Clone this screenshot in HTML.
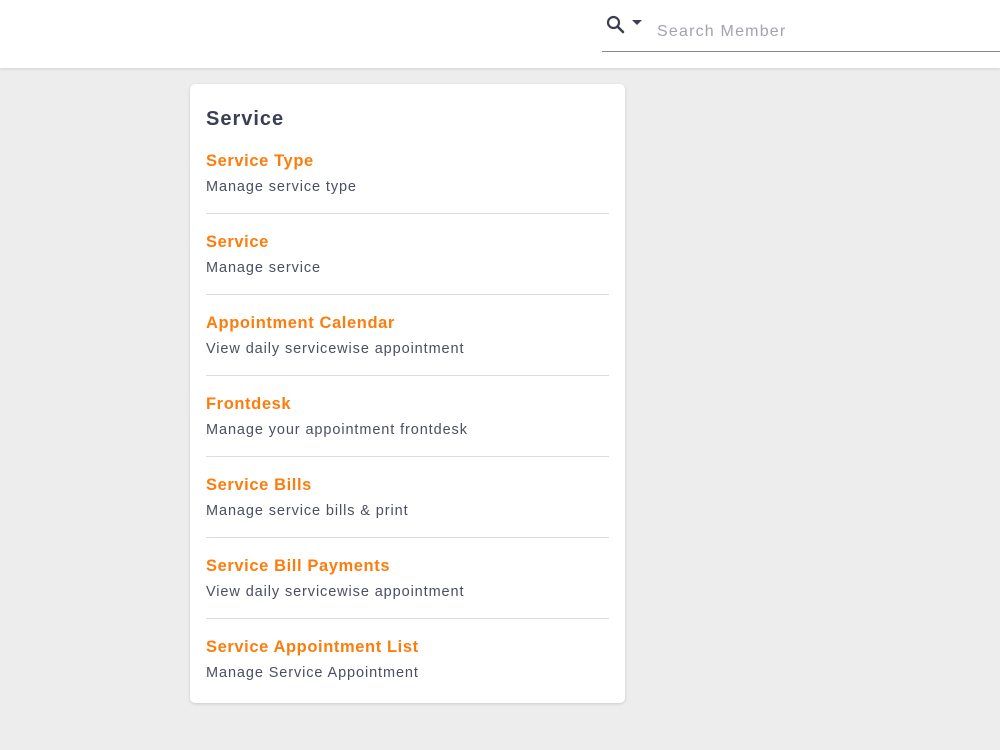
<!DOCTYPE html>
<html><head><style>
*{margin:0;padding:0;box-sizing:border-box}
body{width:1000px;height:750px;background:#ededed;font-family:"Liberation Sans",sans-serif;position:relative;overflow:hidden}
.hdr{position:absolute;left:0;top:0;width:1000px;height:68px;background:#fff;box-shadow:0 1px 3px rgba(0,0,0,.12)}
.search{position:absolute;left:602px;top:0;width:398px;height:52px;border-bottom:1px solid #8a8a8a}
.search .ph{position:absolute;left:55px;top:23px;font-size:16px;color:#a3a3ad;letter-spacing:1.2px}
.card{position:absolute;left:190px;top:84px;width:435px;height:619px;background:#fff;border-radius:5px;box-shadow:0 1px 3px rgba(0,0,0,.15)}
h2{position:absolute;left:16px;top:24px;font-size:20px;font-weight:bold;color:#3a3f55;letter-spacing:1px}
.item{position:absolute;left:16px;width:403px;height:81px}
.item .t{position:absolute;top:68px;font-size:16.5px;font-weight:bold;color:#fb7d0e;letter-spacing:0.6px;white-space:nowrap}
.item .d{position:absolute;top:95px;font-size:14.5px;color:#4a4f63;letter-spacing:0.9px;white-space:nowrap}
.item .l{position:absolute;top:129px;left:0;width:403px;border-top:1px solid #dcdcdc}
</style></head><body>
<div class="hdr">
<div class="search">
<svg style="position:absolute;left:4px;top:15px" width="20" height="20" viewBox="0 0 20 20"><circle cx="7.5" cy="7.5" r="5.5" fill="none" stroke="#3a3f55" stroke-width="2.2"/><line x1="11.5" y1="11.5" x2="17" y2="17" stroke="#3a3f55" stroke-width="2.6" stroke-linecap="round"/></svg>
<svg style="position:absolute;left:30px;top:20px" width="10" height="6" viewBox="0 0 10 6"><path d="M0 0H10L5 5Z" fill="#3a3f55"/></svg>
<span class="ph">Search Member</span>
</div>
</div>
<div class="card">
<h2>Service</h2>
<div class="item" style="top:0"><div class="t">Service Type</div><div class="d">Manage service type</div><div class="l"></div></div>
<div class="item" style="top:81px"><div class="t">Service</div><div class="d">Manage service</div><div class="l"></div></div>
<div class="item" style="top:162px"><div class="t">Appointment Calendar</div><div class="d">View daily servicewise appointment</div><div class="l"></div></div>
<div class="item" style="top:243px"><div class="t">Frontdesk</div><div class="d">Manage your appointment frontdesk</div><div class="l"></div></div>
<div class="item" style="top:324px"><div class="t">Service Bills</div><div class="d">Manage service bills &amp; print</div><div class="l"></div></div>
<div class="item" style="top:405px"><div class="t">Service Bill Payments</div><div class="d">View daily servicewise appointment</div><div class="l"></div></div>
<div class="item" style="top:486px"><div class="t">Service Appointment List</div><div class="d">Manage Service Appointment</div></div>
</div>
</body></html>
